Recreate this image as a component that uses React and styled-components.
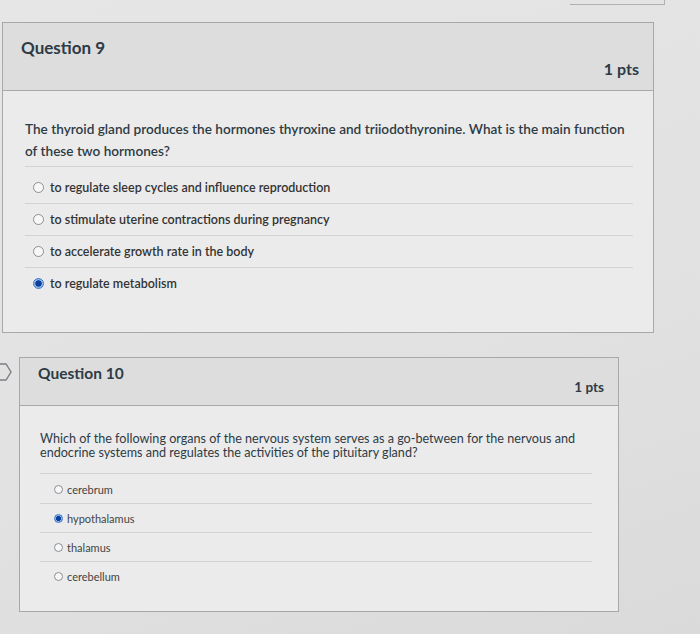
import React from 'react';
import styled, { createGlobalStyle } from 'styled-components';

const GlobalStyle = createGlobalStyle`
  html, body {
    margin: 0;
    padding: 0;
    background: #e3e3e3;
    font-family: Lato, "Open Sans", sans-serif;
    color: #2d3b45;
  }
`;

const Page = styled.div`
  width: 700px;
  height: 634px;
  overflow: hidden;
  padding-left: 2px;
  box-sizing: border-box;
  background: linear-gradient(160deg, #e6e6e6 0%, #e1e1e1 60%, #dadada 100%);
`;

const PrevCardEdge = styled.div`
  margin-left: 568px;
  width: 94px;
  height: 4px;
  border-bottom: 1px solid #b0b0b0;
  border-right: 1px solid #b0b0b0;
`;

const Row = styled.div`
  display: flex;
  align-items: flex-start;
  margin-top: ${p => p.$top}px;
`;

const Flag = styled.svg`
  width: 12px;
  height: 20px;
  margin-top: 5px;
  margin-left: -2px;
  margin-right: ${p => p.$gap}px;
  flex: none;
`;

const Card = styled.div`
  width: ${p => p.$width}px;
  border: 1px solid #a8a8a8;
  background: #ebebeb;
`;

const Header = styled.div`
  display: flex;
  justify-content: space-between;
  align-items: flex-start;
  height: ${p => p.$height}px;
  box-sizing: border-box;
  padding: ${p => p.$padTop}px ${p => p.$padRight}px 0 ${p => p.$padLeft}px;
  background: #dddddd;
  border-bottom: 1px solid #a8a8a8;
`;

const Title = styled.div`
  font-size: ${p => p.$size}px;
  line-height: ${p => p.$lh}px;
  font-weight: 700;
  color: #2d3b45;
`;

const Points = styled.div`
  margin-top: ${p => p.$offset}px;
  font-size: ${p => p.$size}px;
  line-height: ${p => p.$lh}px;
  font-weight: 700;
  color: #2d3b45;
`;

const Body = styled.div`
  padding: ${p => p.$padTop}px ${p => p.$padRight}px ${p => p.$padBottom}px ${p => p.$padLeft}px;
`;

const QuestionText = styled.div`
  font-size: ${p => p.$size}px;
  line-height: ${p => p.$lh}px;
  color: #2d3b45;
  font-weight: ${p => p.$weight};
`;

const Answers = styled.div`
  margin-top: ${p => p.$gap}px;
  border-top: 1px solid #d2d2d2;
  padding-top: ${p => p.$lead}px;
`;

const Answer = styled.div`
  display: flex;
  align-items: center;
  height: ${p => p.$height}px;
  padding-left: ${p => p.$indent}px;
  border-bottom: 1px solid #d2d2d2;
  font-size: ${p => p.$size}px;
  font-weight: ${p => p.$weight};
  color: ${p => p.$color};

  &:last-child {
    border-bottom: none;
  }
`;

const Radio = styled.span`
  width: ${p => p.$size}px;
  height: ${p => p.$size}px;
  box-sizing: border-box;
  border-radius: 50%;
  margin-right: ${p => p.$gap}px;
  flex: none;
  border: 1px solid ${p => (p.$checked ? '#3a78c9' : '#8a8f94')};
  background: ${p =>
    p.$checked
      ? 'radial-gradient(circle, #0b3f9a 0 45%, #8fb6ea 55% 100%)'
      : '#f7f7f7'};
`;

const q9 = {
  title: 'Question 9',
  text:
    'The thyroid gland produces the hormones thyroxine and triiodothyronine. What is the main function of these two hormones?',
  answers: [
    'to regulate sleep cycles and influence reproduction',
    'to stimulate uterine contractions during pregnancy',
    'to accelerate growth rate in the body',
    'to regulate metabolism',
  ],
  checked: 3,
};

const q10 = {
  title: 'Question 10',
  text:
    'Which of the following organs of the nervous system serves as a go-between for the nervous and endocrine systems and regulates the activities of the pituitary gland?',
  answers: ['cerebrum', 'hypothalamus', 'thalamus', 'cerebellum'],
  checked: 1,
};

const App = () => (
  <>
    <GlobalStyle />
    <Page>
      <PrevCardEdge />

      <Row $top={17}>
        <Card $width={650}>
          <Header $height={68} $padTop={15} $padLeft={18} $padRight={14}>
            <Title $size={17} $lh={20}>{q9.title}</Title>
            <Points $offset={21} $size={16} $lh={20}>1 pts</Points>
          </Header>
          <Body $padTop={27} $padLeft={22} $padRight={20} $padBottom={33}>
            <QuestionText $size={13.6} $lh={22} $weight={600}>{q9.text}</QuestionText>
            <Answers $gap={4} $lead={5}>
              {q9.answers.map((a, i) => (
                <Answer key={a} $height={31} $indent={8} $size={12.5} $weight={600} $color="#333">
                  <Radio $size={11} $gap={6} $checked={i === q9.checked} />
                  {a}
                </Answer>
              ))}
            </Answers>
          </Body>
        </Card>
      </Row>

      <Row $top={24}>
        <Flag $gap={7} viewBox="0 0 12 20">
          <path d="M0 2 H6 L11 10 L6 18 H0" fill="none" stroke="#7a7f84" strokeWidth="1.4" />
        </Flag>
        <Card $width={598}>
          <Header $height={48} $padTop={6} $padLeft={18} $padRight={14}>
            <Title $size={15.5} $lh={18}>{q10.title}</Title>
            <Points $offset={14} $size={13.5} $lh={18}>1 pts</Points>
          </Header>
          <Body $padTop={26} $padLeft={20} $padRight={26} $padBottom={21}>
            <QuestionText $size={12.6} $lh={14} $weight={400}>{q10.text}</QuestionText>
            <Answers $gap={13} $lead={1}>
              {q10.answers.map((a, i) => (
                <Answer key={a} $height={28} $indent={14} $size={11} $weight={400} $color="#444">
                  <Radio $size={9} $gap={4} $checked={i === q10.checked} />
                  {a}
                </Answer>
              ))}
            </Answers>
          </Body>
        </Card>
      </Row>
    </Page>
  </>
);

export default App;
